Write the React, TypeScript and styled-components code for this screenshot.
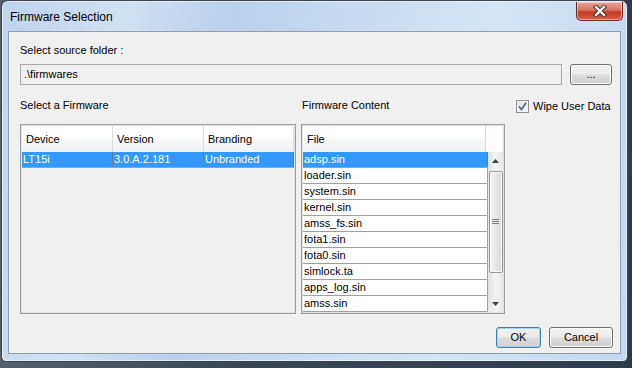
import React from "react";
import styled, { createGlobalStyle } from "styled-components";

const GlobalStyle = createGlobalStyle`
  html, body {
    margin: 0;
    padding: 0;
    background: #3d4856;
  }
  * {
    box-sizing: border-box;
  }
`;

const UI_FONT = `"Segoe UI", "Liberation Sans", Arial, sans-serif`;

const Desktop = styled.div`
  width: 632px;
  height: 368px;
  padding-left: 1px;
  display: flex;
  align-items: flex-start;
  background: linear-gradient(90deg, #56606c, #3a4654 40%, #2f3b4b);
  font-family: ${UI_FONT};
  font-size: 11px;
  color: #000;
`;

const Window = styled.div`
  width: 627px;
  height: 362px;
  border: 1px solid #3b4350;
  border-radius: 7px 7px 5px 5px;
  padding: 0 6px 7px;
  display: flex;
  flex-direction: column;
  background: linear-gradient(
    100deg,
    #bdd4ee 0%,
    #cfe1f4 18%,
    #b9d1ec 34%,
    #c7dcf2 52%,
    #d3e5f7 72%,
    #c1d8f0 100%
  );
  box-shadow: inset 0 0 0 1px rgba(255, 255, 255, 0.55);
`;

const TitleBar = styled.div`
  height: 30px;
  display: flex;
  justify-content: space-between;
  align-items: flex-start;
`;

const Title = styled.div`
  margin: 9px 0 0 2px;
  line-height: 15px;
  font-size: 12px;
  color: #000;
`;

const CloseButton = styled.div`
  width: 47px;
  height: 19px;
  margin: 1px -2px 0 0;
  border: 1px solid #6e2a25;
  border-top: none;
  border-radius: 0 0 5px 5px;
  display: flex;
  align-items: center;
  justify-content: center;
  background: linear-gradient(180deg, #e8a594 0%, #d9745f 45%, #c43b22 55%, #d4624a 100%);
  box-shadow: inset 0 0 0 1px rgba(255, 255, 255, 0.45);
`;

const Client = styled.div`
  flex: 1;
  border: 1px solid #8c9db2;
  background: #f0f0f0;
  padding: 11px 8px 5px 11px;
  display: flex;
  flex-direction: column;
`;

const Label = styled.div<{ $indent?: number }>`
  line-height: 15px;
  height: 15px;
  white-space: nowrap;
  padding-left: ${(p) => p.$indent ?? 0}px;
`;

const FolderRow = styled.div`
  margin-top: 6px;
  height: 21px;
  display: flex;
  gap: 8px;
`;

const PathBox = styled.div`
  flex: 1;
  border: 1px solid #a9a9a9;
  background: #f0f0f0;
  padding-left: 3px;
  line-height: 19px;
`;

const PushButton = styled.div<{ $width: number; $default?: boolean }>`
  width: ${(p) => p.$width}px;
  height: 21px;
  border: 1px solid ${(p) => (p.$default ? "#3c7fb1" : "#707070")};
  border-radius: 3px;
  display: flex;
  align-items: center;
  justify-content: center;
  background: linear-gradient(180deg, #f2f2f2 0%, #ebebeb 48%, #dddddd 52%, #cfcfcf 100%);
  box-shadow: inset 0 0 0 1px ${(p) => (p.$default ? "#a6d6f2" : "#fcfcfc")};
  line-height: 1;
`;

const Sections = styled.div`
  margin-top: 13px;
  display: grid;
  grid-template-columns: 276px 204px 1fr;
  grid-template-rows: 15px 190px;
  column-gap: 5px;
  row-gap: 11px;
`;

const CheckRow = styled.label`
  display: flex;
  align-items: center;
  height: 15px;
  padding-left: 6px;
  white-space: nowrap;
`;

const CheckBox = styled.span`
  width: 13px;
  height: 13px;
  margin-top: 2px;
  margin-right: 4px;
  border: 1px solid #8f8f8f;
  background: linear-gradient(135deg, #dcdcdc, #fbfbfb);
  box-shadow: inset 0 0 0 1px #f4f4f4;
  display: flex;
  align-items: center;
  justify-content: center;
`;

const Grid = styled.div`
  border: 1px solid #9c9c9c;
  box-shadow: inset 0 0 0 1px #e2e2e2;
  background: #f0f0f0;
  padding: 1px;
  display: flex;
  flex-direction: column;
`;

const HeaderRow = styled.div`
  height: 26px;
  display: flex;
  flex-shrink: 0;
`;

const HeaderCell = styled.div<{ $width?: number }>`
  ${(p) => (p.$width ? `width: ${p.$width}px;` : "flex: 1;")}
  padding-left: 4px;
  display: flex;
  align-items: center;
  border-right: 1px solid #dcdcdc;
  background: linear-gradient(180deg, #ffffff 0%, #ffffff 40%, #f6f7f9 60%, #f1f2f4 100%);
`;

const HeaderFiller = styled.div`
  flex: 1;
  background: #fdfdfd;
`;

const DataRow = styled.div<{ $selected?: boolean }>`
  height: 16px;
  display: flex;
  flex-shrink: 0;
  background: ${(p) => (p.$selected ? "#3399ff" : "#ffffff")};
  color: ${(p) => (p.$selected ? "#ffffff" : "#000000")};
  border-bottom: 1px solid #a0a0a0;
`;

const DataCell = styled.div<{ $width?: number; $selected?: boolean }>`
  ${(p) => (p.$width ? `width: ${p.$width}px;` : "flex: 1;")}
  padding-left: 1px;
  line-height: 15px;
  white-space: nowrap;
  overflow: hidden;
  border-right: 1px solid ${(p) => (p.$selected ? "#6f7a86" : "#a0a0a0")};
`;

const ListBody = styled.div`
  flex: 1;
  display: flex;
`;

const RowStack = styled.div`
  width: 185px;
  display: flex;
  flex-direction: column;
`;

const ScrollBar = styled.div`
  flex: 1;
  display: flex;
  flex-direction: column;
  align-items: center;
  background: linear-gradient(90deg, #e3e3e3, #f3f3f3 50%, #e9e9e9);
`;

const ScrollArrow = styled.div`
  height: 17px;
  width: 100%;
  display: flex;
  align-items: center;
  justify-content: center;
  flex-shrink: 0;
`;

const ScrollThumb = styled.div`
  width: 14px;
  height: 102px;
  margin-top: 2px;
  border: 1px solid #989898;
  border-radius: 2px;
  background: linear-gradient(90deg, #f3f3f3, #e8e8e8 50%, #d8d8d8);
  box-shadow: inset 0 0 0 1px #fbfbfb;
  display: flex;
  align-items: center;
  justify-content: center;
`;

const ScrollSpacer = styled.div`
  flex: 1;
`;

const Buttons = styled.div`
  margin-top: 13px;
  margin-right: -1px;
  display: flex;
  justify-content: flex-end;
  gap: 8px;
`;

const firmwares = [{ device: "LT15i", version: "3.0.A.2.181", branding: "Unbranded" }];

const files = [
  "adsp.sin",
  "loader.sin",
  "system.sin",
  "kernel.sin",
  "amss_fs.sin",
  "fota1.sin",
  "fota0.sin",
  "simlock.ta",
  "apps_log.sin",
  "amss.sin",
];

function CloseGlyph() {
  return (
    <svg width="14" height="12" viewBox="0 0 14 12">
      <path d="M3 2 L11 10 M11 2 L3 10" stroke="#3b2320" strokeWidth="4.2" strokeLinecap="square" />
      <path d="M3 2 L11 10 M11 2 L3 10" stroke="#ffffff" strokeWidth="2.4" strokeLinecap="square" />
    </svg>
  );
}

function Tick() {
  return (
    <svg width="9" height="9" viewBox="0 0 9 9">
      <path d="M1 4.5 L3.5 7.5 L8 0.8" stroke="#4a5f97" strokeWidth="1.6" fill="none" />
    </svg>
  );
}

function Arrow({ up }: { up?: boolean }) {
  return (
    <svg width="7" height="4" viewBox="0 0 7 4">
      <path d={up ? "M0 4 L3.5 0 L7 4 Z" : "M0 0 L3.5 4 L7 0 Z"} fill="#404040" />
    </svg>
  );
}

function Gripper() {
  return (
    <svg width="7" height="6" viewBox="0 0 7 6">
      <path d="M0 0.5 H7 M0 2.5 H7 M0 4.5 H7" stroke="#7a7a7a" strokeWidth="1" />
    </svg>
  );
}

export default function App() {
  return (
    <>
      <GlobalStyle />
      <Desktop>
        <Window>
          <TitleBar>
            <Title>Firmware Selection</Title>
            <CloseButton>
              <CloseGlyph />
            </CloseButton>
          </TitleBar>
          <Client>
            <Label>Select source folder :</Label>
            <FolderRow>
              <PathBox>.\firmwares</PathBox>
              <PushButton $width={42}>...</PushButton>
            </FolderRow>
            <Sections>
              <Label>Select a Firmware</Label>
              <Label $indent={1}>Firmware Content</Label>
              <CheckRow>
                <CheckBox>
                  <Tick />
                </CheckBox>
                Wipe User Data
              </CheckRow>

              <Grid>
                <HeaderRow>
                  <HeaderCell $width={91}>Device</HeaderCell>
                  <HeaderCell $width={91}>Version</HeaderCell>
                  <HeaderCell>Branding</HeaderCell>
                </HeaderRow>
                {firmwares.map((f) => (
                  <DataRow key={f.device} $selected>
                    <DataCell $width={91} $selected>
                      {f.device}
                    </DataCell>
                    <DataCell $width={91} $selected>
                      {f.version}
                    </DataCell>
                    <DataCell $selected>{f.branding}</DataCell>
                  </DataRow>
                ))}
              </Grid>

              <Grid>
                <HeaderRow>
                  <HeaderCell $width={183}>File</HeaderCell>
                  <HeaderFiller />
                </HeaderRow>
                <ListBody>
                  <RowStack>
                    {files.map((name, i) => (
                      <DataRow key={name} $selected={i === 0}>
                        <DataCell $selected={i === 0}>{name}</DataCell>
                      </DataRow>
                    ))}
                  </RowStack>
                  <ScrollBar>
                    <ScrollArrow>
                      <Arrow up />
                    </ScrollArrow>
                    <ScrollThumb>
                      <Gripper />
                    </ScrollThumb>
                    <ScrollSpacer />
                    <ScrollArrow>
                      <Arrow />
                    </ScrollArrow>
                  </ScrollBar>
                </ListBody>
              </Grid>
              <div />
            </Sections>
            <Buttons>
              <PushButton $width={45} $default>
                OK
              </PushButton>
              <PushButton $width={64}>Cancel</PushButton>
            </Buttons>
          </Client>
        </Window>
      </Desktop>
    </>
  );
}
